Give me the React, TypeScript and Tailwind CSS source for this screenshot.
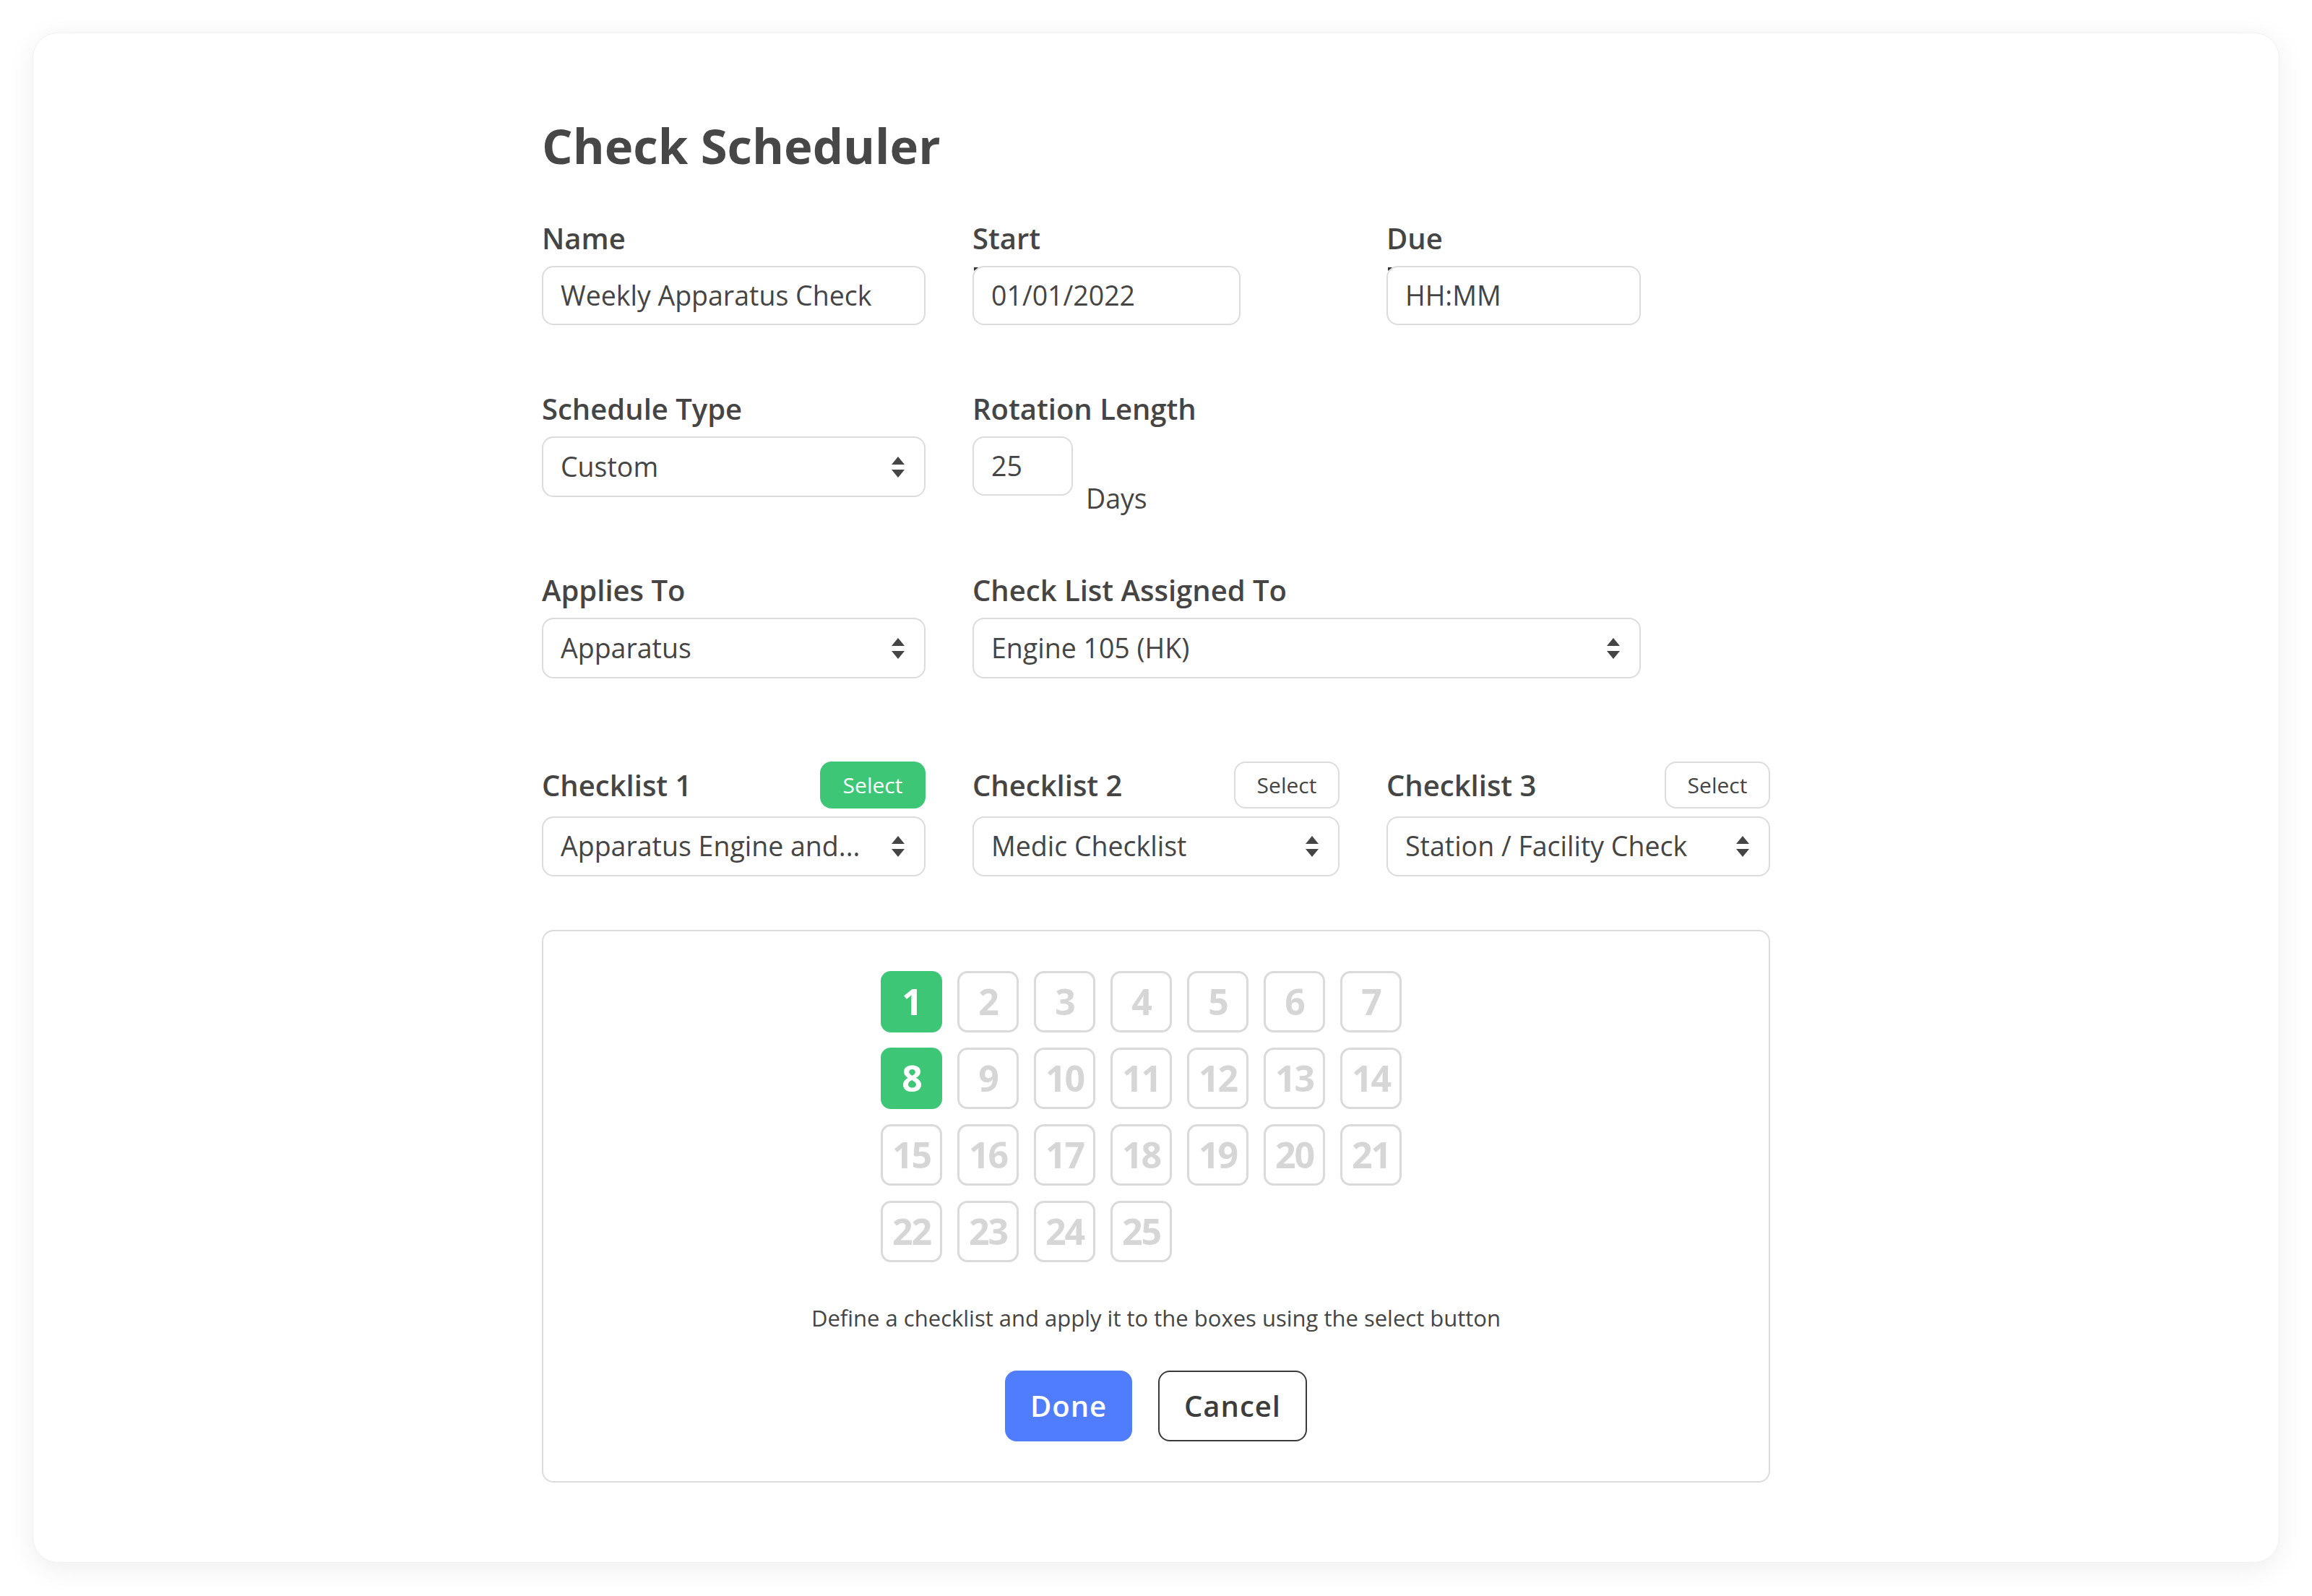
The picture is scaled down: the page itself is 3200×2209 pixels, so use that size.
import React from 'react'

const label = "h-[48px] leading-[48px] text-[40px] font-semibold text-[#454545] whitespace-nowrap"
const box = "h-[82px] rounded-[16px] border-2 border-[#dcdcdc] bg-white flex items-center pl-[24px] text-[37.5px] text-[#454545] whitespace-nowrap"

function Arrows() {
  return (
    <svg width="18" height="29" viewBox="0 0 18 29" className="shrink-0">
      <path d="M9 0 L18 11 L0 11 Z" fill="#454545" />
      <path d="M0 18 L18 18 L9 29 Z" fill="#454545" />
    </svg>
  )
}

function Tick() {
  return <span className="absolute left-[0px] top-[0px] w-[6px] h-[5px] bg-[#333] [clip-path:polygon(0_0,100%_0,0_100%)]" />
}

function SelectBox({ value, className = '' }: { value: string; className?: string }) {
  return (
    <div className={`${box} justify-between pr-[27px] ${className}`}>
      <span className="overflow-hidden">{value}</span>
      <Arrows />
    </div>
  )
}

function SelectButton({ active }: { active?: boolean }) {
  return (
    <button
      className={
        active
          ? 'h-[65px] w-[146px] rounded-[16px] bg-[#3ec677] text-white text-[30px]'
          : 'h-[65px] w-[146px] rounded-[16px] border-2 border-[#dcdcdc] bg-white text-[#454545] text-[30px]'
      }
    >
      Select
    </button>
  )
}

function ChecklistField({ title, value, width, active }: { title: string; value: string; width: string; active?: boolean }) {
  return (
    <div className={width}>
      <div className="h-[65px] flex items-center justify-between">
        <span className="text-[40px] font-semibold text-[#454545] leading-[65px]">{title}</span>
        <SelectButton active={active} />
      </div>
      <SelectBox value={value} className="mt-[11px] h-[83px]" />
    </div>
  )
}

const cells = Array.from({ length: 25 }, (_, i) => i + 1)
const selected = [1, 8]

export default function App() {
  return (
    <div className="min-h-[2209px] bg-white p-[45px] font-['Open_Sans',sans-serif] text-[#454545]">
      <div className="h-[2118px] rounded-[35px] bg-white border border-[#f1f1f1] shadow-[0_8px_40px_rgba(0,0,0,0.07)] pl-[704px] pt-[115px]">
        <h1 className="h-[80px] leading-[80px] text-[67px] font-bold text-[#474747]">Check Scheduler</h1>

        {/* Row 1 */}
        <div className="mt-[65px] flex gap-[65px]">
          <div className="w-[531px]">
            <div className={label}>Name</div>
            <div className={`${box} mt-[14px]`}>Weekly Apparatus Check</div>
          </div>
          <div className="w-[508px]">
            <div className={label}>Start</div>
            <div className={`${box} mt-[14px] w-[371px] relative`}>
              <Tick />
              01/01/2022
            </div>
          </div>
          <div className="w-[531px]">
            <div className={label}>Due</div>
            <div className={`${box} mt-[14px] w-[352px] relative`}>
              <Tick />
              HH:MM
            </div>
          </div>
        </div>

        {/* Row 2 */}
        <div className="mt-[92px] flex gap-[65px]">
          <div className="w-[531px]">
            <div className={label}>Schedule Type</div>
            <SelectBox value="Custom" className="mt-[14px] h-[84px]" />
          </div>
          <div className="w-[508px]">
            <div className={label}>Rotation Length</div>
            <div className="mt-[14px] h-[84px] flex items-start">
              <div className={`${box} w-[139px]`}>25</div>
              <span className="ml-[18px] mt-[60px] leading-[52px] text-[37.5px] text-[#454545]">Days</span>
            </div>
          </div>
        </div>

        {/* Row 3 */}
        <div className="mt-[105px] flex gap-[65px]">
          <div className="w-[531px]">
            <div className={label}>Applies To</div>
            <SelectBox value="Apparatus" className="mt-[14px] h-[84px]" />
          </div>
          <div className="w-[925px]">
            <div className={label}>Check List Assigned To</div>
            <SelectBox value="Engine 105 (HK)" className="mt-[14px] h-[84px]" />
          </div>
        </div>

        {/* Row 4 */}
        <div className="mt-[115px] flex gap-[65px]">
          <ChecklistField title="Checklist 1" value="Apparatus Engine and..." width="w-[531px]" active />
          <ChecklistField title="Checklist 2" value="Medic Checklist" width="w-[508px]" />
          <ChecklistField title="Checklist 3" value="Station / Facility Check" width="w-[531px]" />
        </div>

        {/* Rotation grid */}
        <div className="mt-[74px] w-[1700px] rounded-[16px] border-2 border-[#dcdcdc] pt-[55px] pb-[55px]">
          <div className="flex justify-center pr-[41px]">
            <div className="grid grid-cols-[repeat(7,85px)] gap-[21px]">
              {cells.map((n) => {
                const on = selected.includes(n)
                return (
                  <div
                    key={n}
                    className={
                      on
                        ? 'h-[85px] rounded-[14px] bg-[#3ec677] flex items-center justify-center text-[50px] font-bold text-white tracking-[-2px]'
                        : 'h-[85px] rounded-[14px] border-[3px] border-[#dadada] flex items-center justify-center text-[50px] font-bold text-[#d6d6d6] tracking-[-2px]'
                    }
                  >
                    {n}
                  </div>
                )
              })}
            </div>
          </div>
          <p className="mt-[57px] h-[40px] leading-[40px] text-center text-[31px] text-[#454545]">
            Define a checklist and apply it to the boxes using the select button
          </p>
          <div className="mt-[53px] flex justify-center gap-[36px]">
            <button className="h-[98px] w-[176px] rounded-[16px] bg-[#4f7dfe] text-white text-[40px] font-semibold tracking-[1px]">
              Done
            </button>
            <button className="h-[98px] w-[206px] rounded-[16px] border-2 border-[#3a3a3a] bg-white text-[#3d3d3d] text-[40px] font-semibold tracking-[1px]">
              Cancel
            </button>
          </div>
        </div>
      </div>
    </div>
  )
}
